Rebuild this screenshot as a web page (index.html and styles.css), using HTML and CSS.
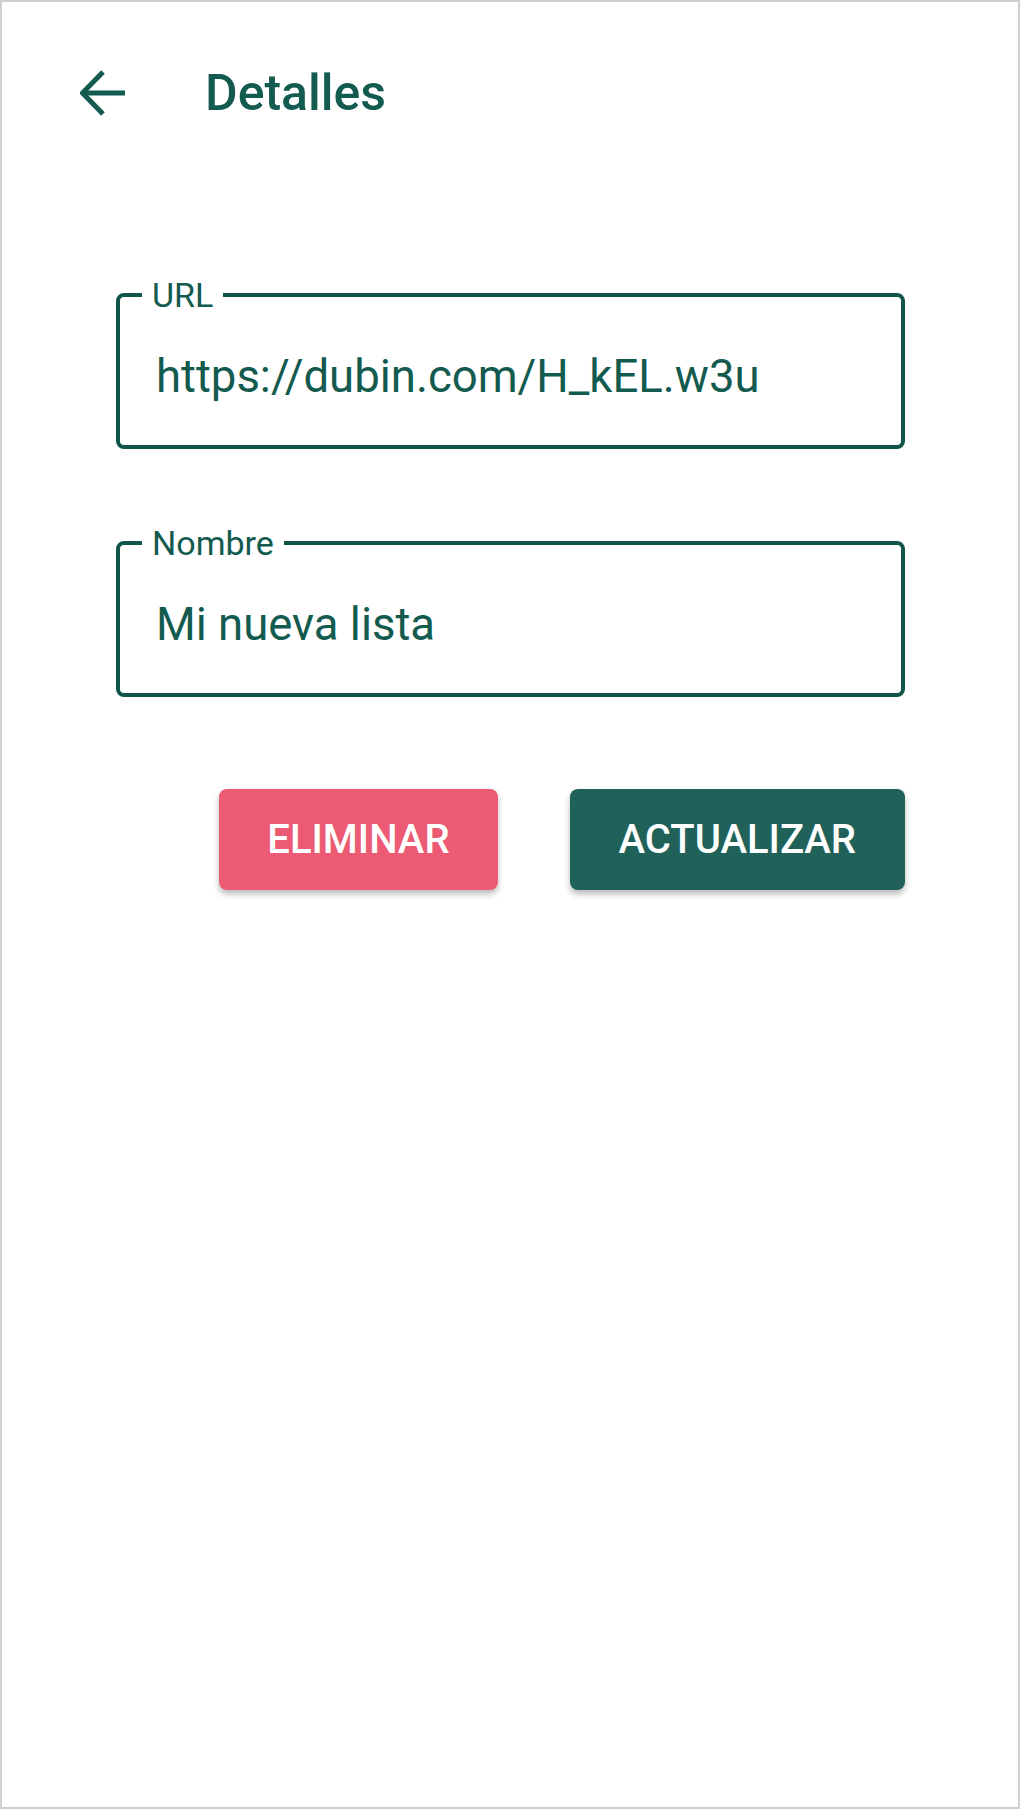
FILE: index.html
```html
<html>
    <head>
        <meta charset="UTF-8">
        <title>Detalles</title>
        <link rel="stylesheet" href="styles.css">
    </head>
    <body>
        <div class="screen">
            <div class="topbar">
                <span class="back">
                    <svg width="46" height="46" viewBox="0 0 46 46">
                        <polyline points="23,2 2.5,23 23,44" fill="none" stroke="#135a4f" stroke-width="5" stroke-linejoin="miter"/>
                        <line x1="3" y1="23" x2="45" y2="23" stroke="#135a4f" stroke-width="5"/>
                    </svg>
                </span>
                <span class="title">Detalles</span>
            </div>

            <div class="content">
                <fieldset class="field">
                    <legend>URL</legend>
                    <div class="value">https://dubin.com/H_kEL.w3u</div>
                </fieldset>

                <fieldset class="field">
                    <legend>Nombre</legend>
                    <div class="value">Mi nueva lista</div>
                </fieldset>

                <div class="actions">
                    <button class="btn btn-delete">ELIMINAR</button>
                    <button class="btn btn-update">ACTUALIZAR</button>
                </div>
            </div>
        </div>
    </body>
</html>
```

FILE: styles.css
```css
html, body
{
    margin: 0;
    padding: 0;
    background-color: #ffffff;
    font-family: Roboto, "Liberation Sans", sans-serif;
}

.screen
{
    height: 1809px;
    box-sizing: border-box;
    border: 2px solid #cfcfcf;
    background-color: #ffffff;
}

.topbar
{
    display: flex;
    align-items: center;
    padding: 62px 0 0 78px;
}

.back
{
    display: flex;
    width: 46px;
    height: 46px;
}

.title
{
    margin-left: 79px;
    font-size: 50px;
    font-weight: 500;
    color: #135a4f;
}

.content
{
    width: 789px;
    margin-left: 114px;
    padding-top: 154px;
}

.field
{
    margin: 0 0 75px 0;
    padding: 36px 36px 41px 36px;
    border: 4px solid #10544a;
    border-radius: 8px;
}

.field legend
{
    margin-left: -14px;
    padding: 0 10px;
    font-size: 34px;
    line-height: 38px;
    color: #135a4f;
}

.value
{
    font-size: 45.5px;
    line-height: 54px;
    color: #135a4f;
}

.actions
{
    display: flex;
    justify-content: flex-end;
    gap: 72px;
    margin-top: 92px;
}

.btn
{
    height: 101px;
    padding: 0 48px;
    border: none;
    border-radius: 8px;
    font-family: Roboto, "Liberation Sans", sans-serif;
    font-size: 40px;
    font-weight: 500;
    color: #ffffff;
    box-shadow: 0 4px 6px rgba(0, 0, 0, 0.28);
    cursor: pointer;
}

.btn-delete
{
    background-color: #ec5a74;
}

.btn-update
{
    padding: 0 49px;
    background-color: #20625a;
}
```
